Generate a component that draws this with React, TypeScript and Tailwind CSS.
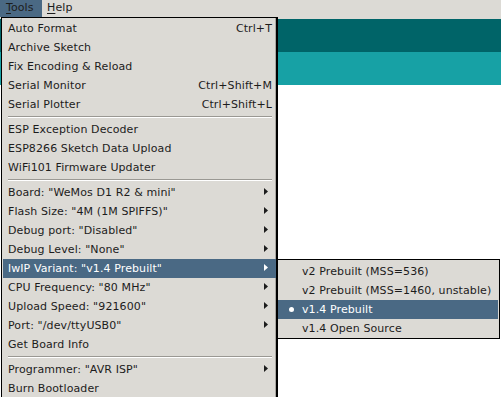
import React from 'react';

type Item =
  | { kind: 'sep' }
  | { kind: 'item'; label: string; shortcut?: string; sub?: boolean; active?: boolean };

const toolsMenu: Item[] = [
  { kind: 'item', label: 'Auto Format', shortcut: 'Ctrl+T' },
  { kind: 'item', label: 'Archive Sketch' },
  { kind: 'item', label: 'Fix Encoding & Reload' },
  { kind: 'item', label: 'Serial Monitor', shortcut: 'Ctrl+Shift+M' },
  { kind: 'item', label: 'Serial Plotter', shortcut: 'Ctrl+Shift+L' },
  { kind: 'sep' },
  { kind: 'item', label: 'ESP Exception Decoder' },
  { kind: 'item', label: 'ESP8266 Sketch Data Upload' },
  { kind: 'item', label: 'WiFi101 Firmware Updater' },
  { kind: 'sep' },
  { kind: 'item', label: 'Board: "WeMos D1 R2 & mini"', sub: true },
  { kind: 'item', label: 'Flash Size: "4M (1M SPIFFS)"', sub: true },
  { kind: 'item', label: 'Debug port: "Disabled"', sub: true },
  { kind: 'item', label: 'Debug Level: "None"', sub: true },
  { kind: 'item', label: 'lwIP Variant: "v1.4 Prebuilt"', sub: true, active: true },
  { kind: 'item', label: 'CPU Frequency: "80 MHz"', sub: true },
  { kind: 'item', label: 'Upload Speed: "921600"', sub: true },
  { kind: 'item', label: 'Port: "/dev/ttyUSB0"', sub: true },
  { kind: 'item', label: 'Get Board Info' },
  { kind: 'sep' },
  { kind: 'item', label: 'Programmer: "AVR ISP"', sub: true },
  { kind: 'item', label: 'Burn Bootloader' },
];

const lwipOptions = [
  { label: 'v2 Prebuilt (MSS=536)' },
  { label: 'v2 Prebuilt (MSS=1460, unstable)' },
  { label: 'v1.4 Prebuilt', checked: true },
  { label: 'v1.4 Open Source' },
];

const Arrow = ({ white }: { white?: boolean }) => (
  <svg width="4" height="7" viewBox="0 0 4 7" className="shrink-0">
    <polygon points="0,0 4,3.5 0,7" fill={white ? '#ffffff' : '#1c1c1c'} />
  </svg>
);

export default function App() {
  return (
    <div className="relative w-[501px] h-[397px] overflow-hidden bg-white font-['DejaVu_Sans',sans-serif] text-[11px] tracking-[0.1px] text-[#1c1c1c]">
      {/* window background */}
      <div className="flex items-start h-[19px] bg-[#dcdad5]">
        <div className="h-[17px] w-[42px] bg-[#4a6984] pl-[6px] leading-[15px]">
          <span className="underline underline-offset-2">T</span>ools
        </div>
        <div className="h-[17px] pl-[5px] leading-[15px]">
          <span className="underline underline-offset-2">H</span>elp
        </div>
      </div>
      <div className="h-[33px] bg-[#006468]" />
      <div className="h-[33px] bg-[#17a1a5]" />

      {/* Tools dropdown */}
      <div className="absolute left-[1px] top-[17px] w-[277px] h-[400px] bg-[#dcdad5] border border-black border-r-2 pt-px shadow-[inset_-1px_0_0_#a9a7a2]">
        {toolsMenu.map((it, i) =>
          it.kind === 'sep' ? (
            <div key={i} className="h-[6px] pt-[2px] pl-[6px] pr-[4px]">
              <div className="h-px bg-[#9a9893]" />
              <div className="h-px bg-white" />
            </div>
          ) : (
            <div
              key={i}
              className={`flex items-center h-[19px] ml-px pl-[5px] leading-[19px] whitespace-nowrap ${
                it.active ? 'bg-[#4a6984] text-white' : ''
              }`}
            >
              <span>{it.label}</span>
              {it.shortcut && <span className="ml-auto pr-[4px]">{it.shortcut}</span>}
              {it.sub && (
                <span className="ml-auto mr-[8px] pb-[3px] flex">
                  <Arrow white={it.active} />
                </span>
              )}
            </div>
          )
        )}
      </div>

      {/* lwIP submenu */}
      <div className="absolute left-[277px] top-[259px] w-[223px] h-[80px] bg-[#dcdad5] border border-black pt-[2px]">
        {lwipOptions.map((o, i) => (
          <div
            key={i}
            className={`relative h-[19px] leading-[19px] pl-[24px] mr-px whitespace-nowrap ${
              o.checked ? 'bg-[#4a6984] text-white' : ''
            }`}
          >
            {o.checked && (
              <span className="absolute left-[11px] top-[7px] w-[5px] h-[5px] rounded-full bg-white" />
            )}
            {o.label}
          </div>
        ))}
      </div>
    </div>
  );
}
